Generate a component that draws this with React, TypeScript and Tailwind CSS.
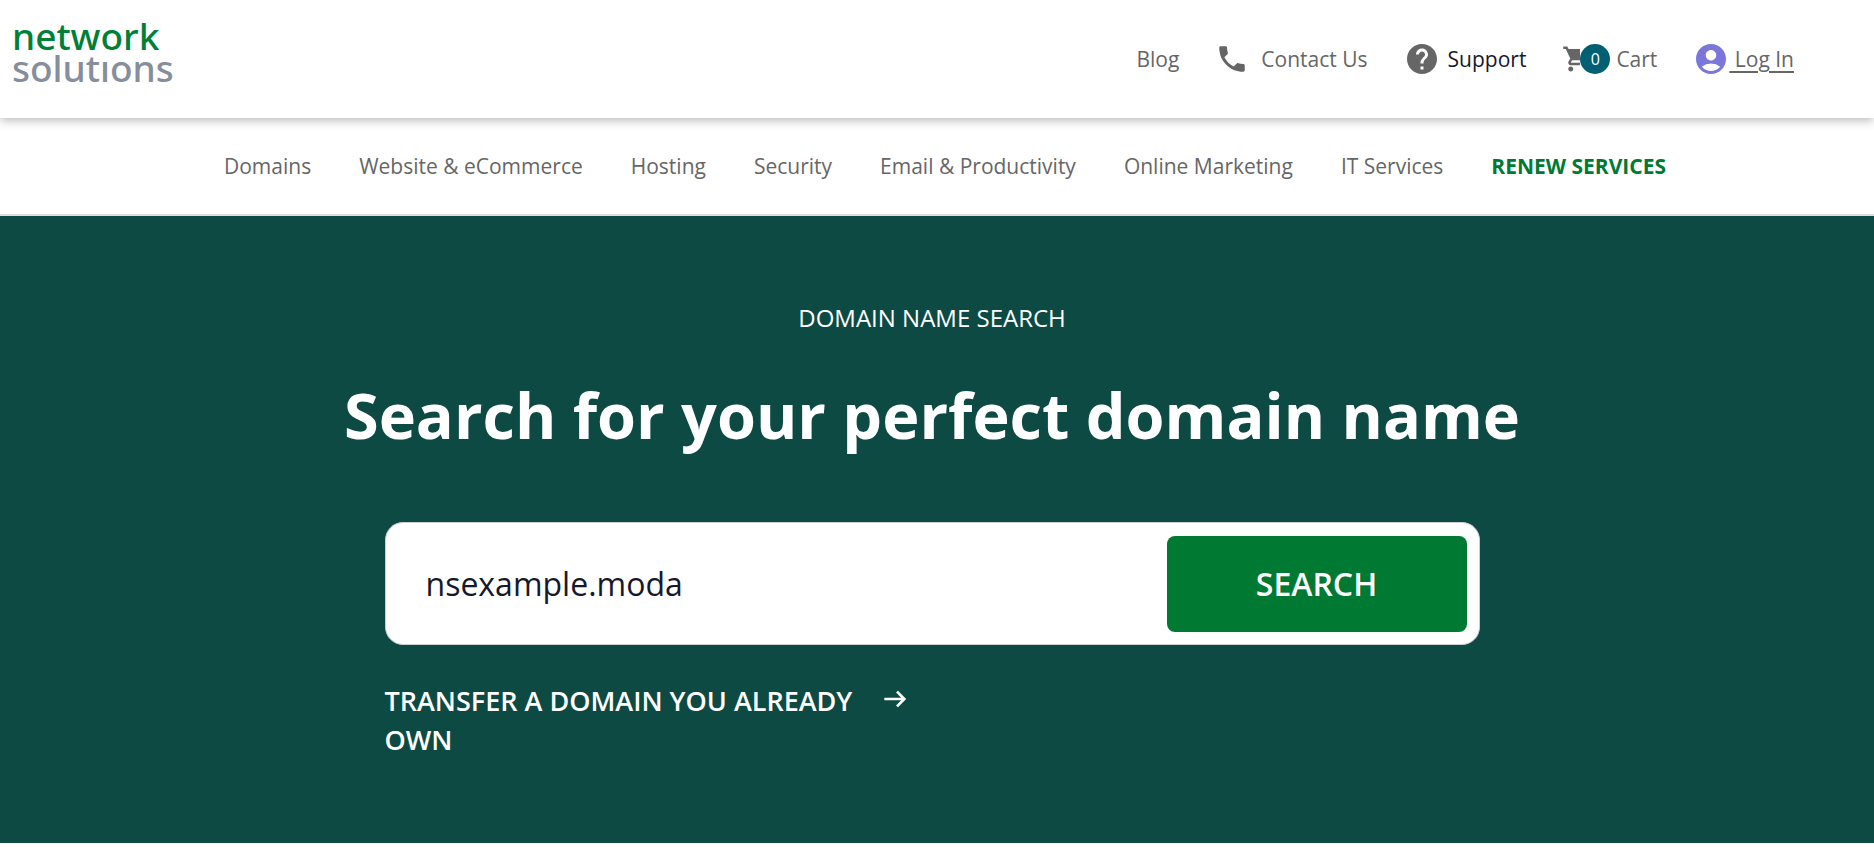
import { useState } from 'react';
import { MdAccountCircle, MdHelp, MdPhone, MdShoppingCart } from 'react-icons/md';

const navItems = [
  'Domains',
  'Website & eCommerce',
  'Hosting',
  'Security',
  'Email & Productivity',
  'Online Marketing',
  'IT Services',
];

function Logo() {
  return (
    <a href="#" className="flex flex-col font-['Noto_Sans',sans-serif] text-[37px] leading-8 font-medium">
      <span className="text-[#008037]">network</span>
      <span className="text-[#878e9b]">solutıons</span>
    </a>
  );
}

function TopBar() {
  return (
    <header className="relative z-10 flex h-[118px] items-start justify-between bg-white pt-5 pr-20 pl-3 shadow-[0_2px_10px_rgba(0,0,0,0.3)]">
      <Logo />
      <div className="flex h-[78px] items-center gap-9 text-[21px] leading-8 text-[#666]">
        <a href="#">Blog</a>
        <a href="#" className="flex items-center gap-3">
          <MdPhone className="size-[34px]" />
          Contact Us
        </a>
        <a href="#" className="flex items-center gap-2 text-[#16192c]">
          <MdHelp className="size-9 text-[#666]" />
          Support
        </a>
        <a href="#" className="flex items-center">
          <span className="flex w-[18px] overflow-hidden">
            <MdShoppingCart className="size-[30px] shrink-0" />
          </span>
          <span className="mr-1.5 flex size-[30px] items-center justify-center rounded-full bg-[#005f73] text-base text-white">
            0
          </span>
          Cart
        </a>
        <a href="#" className="flex items-center whitespace-pre">
          <MdAccountCircle className="size-9 text-[#7b76db]" />
          <span className="underline decoration-2 underline-offset-4"> Log In</span>
        </a>
      </div>
    </header>
  );
}

function MainNav() {
  return (
    <nav className="flex h-[98px] items-center justify-center gap-12 border-b-2 border-[#dedede] bg-white pl-4 text-[21px] leading-8 text-[#666]">
      {navItems.map((item) => (
        <a key={item} href="#">
          {item}
        </a>
      ))}
      <a href="#" className="font-bold text-[#007a33]">
        RENEW SERVICES
      </a>
    </nav>
  );
}

function DomainSearch() {
  const [domain, setDomain] = useState('nsexample.moda');

  return (
    <form
      onSubmit={(e) => e.preventDefault()}
      className="flex h-[123px] items-center rounded-[18px] border border-[#ccd0d5] bg-white p-3"
    >
      <input
        type="text"
        aria-label="Domain name"
        value={domain}
        onChange={(e) => setDomain(e.target.value)}
        className="h-full min-w-0 flex-1 px-7 text-[32px] text-[#16192c] outline-none"
      />
      <button type="submit" className="h-24 w-[300px] rounded-lg bg-[#007a33] text-[32px] font-semibold text-white">
        SEARCH
      </button>
    </form>
  );
}

function Hero() {
  return (
    <main className="bg-[#0c4a43] pt-20 pr-2.5 pb-21 text-white">
      <p className="text-center text-2xl leading-11 font-medium">DOMAIN NAME SEARCH</p>
      <h1 className="mt-8 text-center text-[63px] leading-[86px] font-bold">Search for your perfect domain name</h1>
      <div className="mx-auto mt-16 max-w-[1095px]">
        <DomainSearch />
        <a href="#" className="mt-9 flex w-[548px] items-start text-[27px] leading-[39px] font-semibold">
          <span className="w-[494px]">TRANSFER A DOMAIN YOU ALREADY OWN</span>
          <svg viewBox="0 0 24 24" className="mt-0.5 size-8" fill="none" stroke="currentColor" strokeWidth="2">
            <path d="M4 12h14.5M13.5 6.5L19 12l-5.5 5.5" />
          </svg>
        </a>
      </div>
    </main>
  );
}

export default function App() {
  return (
    <div className="bg-white font-['Open_Sans',sans-serif]">
      <TopBar />
      <MainNav />
      <Hero />
    </div>
  );
}
